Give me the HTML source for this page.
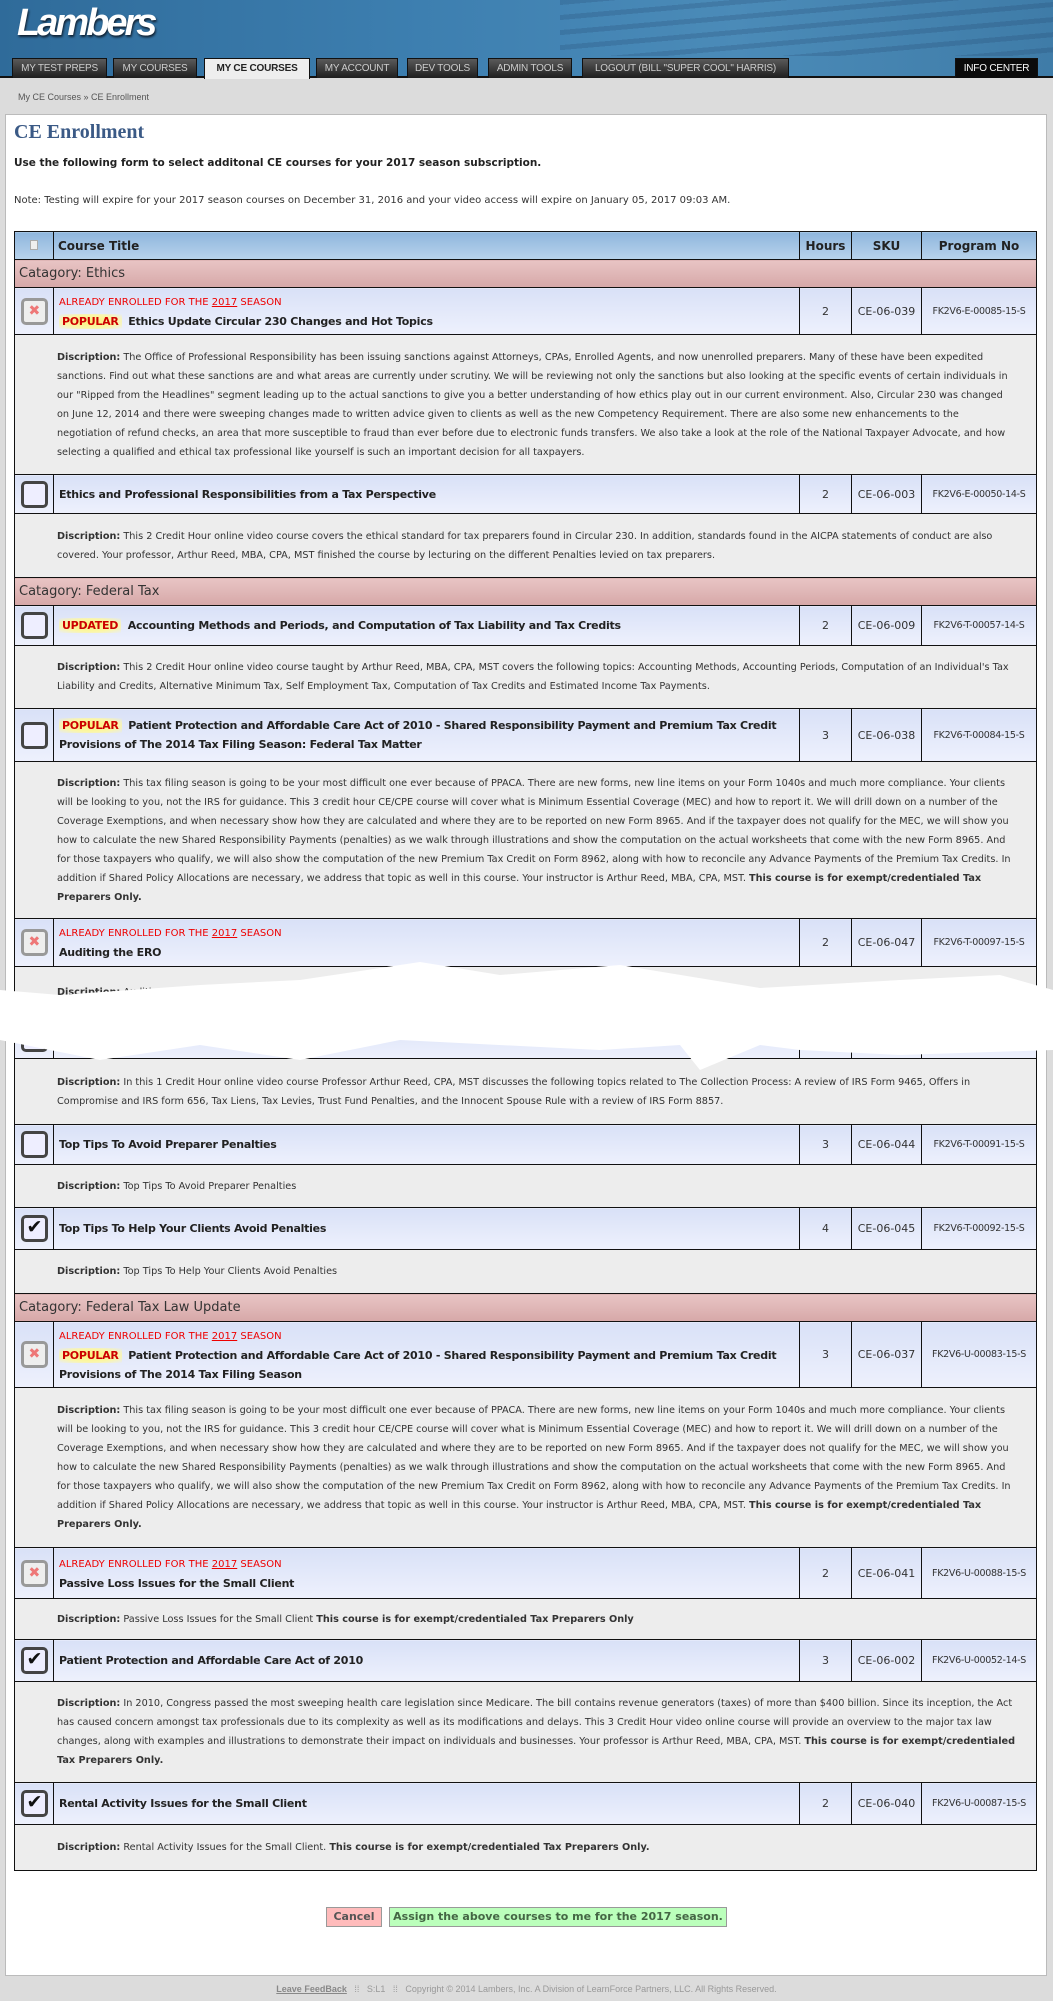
<!DOCTYPE html>
<html><head><meta charset="utf-8">
<style>
*{box-sizing:border-box;margin:0;padding:0}
body{width:1053px;height:2001px;background:#dcdcdc;font-family:"DejaVu Sans","Liberation Sans",sans-serif;color:#333;position:relative;overflow:hidden}
#hdr{position:absolute;left:0;top:0;width:1053px;height:78px;background:linear-gradient(90deg,#2f6b9a 0%,#3d7fb0 40%,#4b8bb8 70%,#3f7ca8 100%);border-bottom:2px solid #111}
#hdr .lines{position:absolute;left:560px;top:0;width:493px;height:56px;background:repeating-linear-gradient(175deg,rgba(30,60,100,.35) 0 5px,rgba(60,110,150,0) 5px 15px);opacity:.6}
#logo{position:absolute;left:17px;top:2px;font-family:"Liberation Sans",sans-serif;font-style:italic;font-weight:bold;font-size:38px;color:#fff;letter-spacing:-3px;text-shadow:1px 2px 2px #123}
.tab{position:absolute;top:58px;height:20px;background:linear-gradient(#5a5a5a,#1e1e1e);border:1px solid #111;border-bottom:none;color:#ccc;font-size:10px;line-height:19px;text-align:center;font-family:"Liberation Sans",sans-serif;letter-spacing:-.2px}
.tab.on{background:#eee;color:#222;font-weight:bold;top:58px;height:21px}
.tab.info{background:#0b0b0b;color:#fff}
#crumb{position:absolute;left:18px;top:92px;font-size:9px;color:#555;font-family:"Liberation Sans",sans-serif}
#box{position:absolute;left:5px;top:114px;width:1042px;height:1862px;background:#fff;border:1px solid #bbb}
h1{position:absolute;left:14px;top:121px;font-family:"Liberation Serif",serif;font-size:20px;color:#3b5a86;font-weight:bold}
.intro{position:absolute;left:14px;top:157px;font-size:10.5px;font-weight:bold;color:#222}
.note{position:absolute;left:14px;top:195px;font-size:10px;color:#333}
table{position:absolute;left:14px;top:231px;width:1022px;border-collapse:collapse;table-layout:fixed}
td,th{border:1px solid #111;font-size:10px;vertical-align:middle}
th{background:linear-gradient(#8fb6dd,#b8d3ec);height:28px;font-weight:bold;font-size:12px;color:#222;text-align:center}
th.t{text-align:left;padding-left:4px}
tr.cat td{background:linear-gradient(#e8c4c4,#d6a8a8);height:28px;font-size:13px;color:#333;padding-left:4px;border-left:1px solid #111;border-right:1px solid #111}
tr.row td{background:linear-gradient(#d9e1f7,#eef1fd);}
tr.row td.c{text-align:center}
td.title{padding:2px 5px;font-weight:bold;font-size:11px;color:#222;line-height:19px;letter-spacing:-.25px}
td.h{text-align:center;font-size:11px}
td.sku{text-align:center;font-size:11px}
td.pn{text-align:center;font-size:9.5px;letter-spacing:-.3px}
tr.d td{background:#ededed;padding:6px 20px 6px 42px;line-height:19px;font-size:9.7px;color:#333}
.en{color:#e00;font-weight:normal;font-size:10px;letter-spacing:0}
.en u{text-decoration:underline}
.tag{color:#c00;background:radial-gradient(#fbf37a,#fbf6a8 60%,rgba(255,255,255,0));padding:1px 3px;font-weight:bold;margin-right:3px}
.cb{display:inline-block;width:27px;height:27px;border:3px solid #444;border-radius:5px;background:#eef;vertical-align:middle;position:relative}
.cb.x{border-color:#999;background:#eee}
.cb.x:after{content:"\2716";position:absolute;left:5px;top:2px;color:#e77;font-size:14px}
.cb.k:after{content:"\2714";position:absolute;left:3px;top:-2px;color:#111;font-size:19px}
#tear{position:absolute;left:0;top:960px;width:1053px;height:110px}
.btn{position:absolute;top:1907px;height:20px;font-size:11px;font-weight:bold;line-height:18px;text-align:center;border:1px solid #999}
#foot{position:absolute;top:1984px;left:0;width:1053px;text-align:center;font-size:9px;color:#999;font-family:"Liberation Sans",sans-serif}
</style></head><body>
<div id="hdr"><div class="lines"></div><div id="logo">Lambers</div></div>
<div class="tab" style="left:12px;width:95px">MY TEST PREPS</div>
<div class="tab" style="left:113px;width:84px">MY COURSES</div>
<div class="tab on" style="left:204px;width:106px">MY CE COURSES</div>
<div class="tab" style="left:316px;width:82px">MY ACCOUNT</div>
<div class="tab" style="left:407px;width:71px">DEV TOOLS</div>
<div class="tab" style="left:488px;width:84px">ADMIN TOOLS</div>
<div class="tab" style="left:582px;width:207px">LOGOUT (BILL "SUPER COOL" HARRIS)</div>
<div class="tab info" style="left:955px;width:83px">INFO CENTER</div>
<div id="crumb">My CE Courses » CE Enrollment</div>
<div id="box"></div>
<h1>CE Enrollment</h1>
<div class="intro">Use the following form to select additonal CE courses for your 2017 season subscription.</div>
<div class="note">Note: Testing will expire for your 2017 season courses on December 31, 2016 and your video access will expire on January 05, 2017 09:03 AM.</div>
<table>
<colgroup><col style="width:39px"><col style="width:746px"><col style="width:52px"><col style="width:70px"><col style="width:115px"></colgroup>
<tr><th><span style="display:inline-block;width:8px;height:10px;background:#eee;border:1px solid #aaa"></span></th><th class="t">Course Title</th><th>Hours</th><th>SKU</th><th>Program No</th></tr>
<tr class="cat"><td colspan="5">Catagory: Ethics</td></tr>
<tr class="row" style="height:47px"><td class="c"><span class="cb x"></span></td><td class="title"><span class="en">ALREADY ENROLLED FOR THE <u>2017</u> SEASON</span><br><span class="tag">POPULAR</span> Ethics Update Circular 230 Changes and Hot Topics</td><td class="h">2</td><td class="sku">CE-06-039</td><td class="pn">FK2V6-E-00085-15-S</td></tr>
<tr class="d" style="height:140px"><td colspan="5"><b>Discription:</b> The Office of Professional Responsibility has been issuing sanctions against Attorneys, CPAs, Enrolled Agents, and now unenrolled preparers. Many of these have been expedited sanctions. Find out what these sanctions are and what areas are currently under scrutiny. We will be reviewing not only the sanctions but also looking at the specific events of certain individuals in our "Ripped from the Headlines" segment leading up to the actual sanctions to give you a better understanding of how ethics play out in our current environment. Also, Circular 230 was changed on June 12, 2014 and there were sweeping changes made to written advice given to clients as well as the new Competency Requirement. There are also some new enhancements to the negotiation of refund checks, an area that more susceptible to fraud than ever before due to electronic funds transfers. We also take a look at the role of the National Taxpayer Advocate, and how selecting a qualified and ethical tax professional like yourself is such an important decision for all taxpayers.</td></tr>
<tr class="row" style="height:39px"><td class="c"><span class="cb"></span></td><td class="title">Ethics and Professional Responsibilities from a Tax Perspective</td><td class="h">2</td><td class="sku">CE-06-003</td><td class="pn">FK2V6-E-00050-14-S</td></tr>
<tr class="d" style="height:64px"><td colspan="5"><b>Discription:</b> This 2 Credit Hour online video course covers the ethical standard for tax preparers found in Circular 230. In addition, standards found in the AICPA statements of conduct are also covered. Your professor, Arthur Reed, MBA, CPA, MST finished the course by lecturing on the different Penalties levied on tax preparers.</td></tr>
<tr class="cat"><td colspan="5">Catagory: Federal Tax</td></tr>
<tr class="row" style="height:40px"><td class="c"><span class="cb"></span></td><td class="title"><span class="tag">UPDATED</span> Accounting Methods and Periods, and Computation of Tax Liability and Tax Credits</td><td class="h">2</td><td class="sku">CE-06-009</td><td class="pn">FK2V6-T-00057-14-S</td></tr>
<tr class="d" style="height:63px"><td colspan="5"><b>Discription:</b> This 2 Credit Hour online video course taught by Arthur Reed, MBA, CPA, MST covers the following topics: Accounting Methods, Accounting Periods, Computation of an Individual's Tax Liability and Credits, Alternative Minimum Tax, Self Employment Tax, Computation of Tax Credits and Estimated Income Tax Payments.</td></tr>
<tr class="row" style="height:53px"><td class="c"><span class="cb"></span></td><td class="title"><span class="tag">POPULAR</span> Patient Protection and Affordable Care Act of 2010 - Shared Responsibility Payment and Premium Tax Credit Provisions of The 2014 Tax Filing Season: Federal Tax Matter</td><td class="h">3</td><td class="sku">CE-06-038</td><td class="pn">FK2V6-T-00084-15-S</td></tr>
<tr class="d" style="height:157px"><td colspan="5"><b>Discription:</b> This tax filing season is going to be your most difficult one ever because of PPACA. There are new forms, new line items on your Form 1040s and much more compliance. Your clients will be looking to you, not the IRS for guidance. This 3 credit hour CE/CPE course will cover what is Minimum Essential Coverage (MEC) and how to report it. We will drill down on a number of the Coverage Exemptions, and when necessary show how they are calculated and where they are to be reported on new Form 8965. And if the taxpayer does not qualify for the MEC, we will show you how to calculate the new Shared Responsibility Payments (penalties) as we walk through illustrations and show the computation on the actual worksheets that come with the new Form 8965. And for those taxpayers who qualify, we will also show the computation of the new Premium Tax Credit on Form 8962, along with how to reconcile any Advance Payments of the Premium Tax Credits. In addition if Shared Policy Allocations are necessary, we address that topic as well in this course. Your instructor is Arthur Reed, MBA, CPA, MST. <b>This course is for exempt/credentialed Tax Preparers Only.</b></td></tr>
<tr class="row" style="height:48px"><td class="c"><span class="cb x"></span></td><td class="title"><span class="en">ALREADY ENROLLED FOR THE <u>2017</u> SEASON</span><br>Auditing the ERO</td><td class="h">2</td><td class="sku">CE-06-047</td><td class="pn">FK2V6-T-00097-15-S</td></tr>
<tr class="d" style="height:52px"><td colspan="5"><b>Discription:</b> Auditing the ERO</td></tr>
<tr class="row" style="height:40px"><td class="c"><span class="cb"></span></td><td class="title">The Collection Process</td><td class="h">1</td><td class="sku">CE-06-036</td><td class="pn">FK2V6-T-00096-15-S</td></tr>
<tr class="d" style="height:66px"><td colspan="5"><b>Discription:</b> In this 1 Credit Hour online video course Professor Arthur Reed, CPA, MST discusses the following topics related to The Collection Process: A review of IRS Form 9465, Offers in Compromise and IRS form 656, Tax Liens, Tax Levies, Trust Fund Penalties, and the Innocent Spouse Rule with a review of IRS Form 8857.</td></tr>
<tr class="row" style="height:40px"><td class="c"><span class="cb"></span></td><td class="title">Top Tips To Avoid Preparer Penalties</td><td class="h">3</td><td class="sku">CE-06-044</td><td class="pn">FK2V6-T-00091-15-S</td></tr>
<tr class="d" style="height:43px"><td colspan="5"><b>Discription:</b> Top Tips To Avoid Preparer Penalties</td></tr>
<tr class="row" style="height:42px"><td class="c"><span class="cb k"></span></td><td class="title">Top Tips To Help Your Clients Avoid Penalties</td><td class="h">4</td><td class="sku">CE-06-045</td><td class="pn">FK2V6-T-00092-15-S</td></tr>
<tr class="d" style="height:44px"><td colspan="5"><b>Discription:</b> Top Tips To Help Your Clients Avoid Penalties</td></tr>
<tr class="cat"><td colspan="5">Catagory: Federal Tax Law Update</td></tr>
<tr class="row" style="height:66px"><td class="c"><span class="cb x"></span></td><td class="title"><span class="en">ALREADY ENROLLED FOR THE <u>2017</u> SEASON</span><br><span class="tag">POPULAR</span> Patient Protection and Affordable Care Act of 2010 - Shared Responsibility Payment and Premium Tax Credit Provisions of The 2014 Tax Filing Season</td><td class="h">3</td><td class="sku">CE-06-037</td><td class="pn">FK2V6-U-00083-15-S</td></tr>
<tr class="d" style="height:160px"><td colspan="5"><b>Discription:</b> This tax filing season is going to be your most difficult one ever because of PPACA. There are new forms, new line items on your Form 1040s and much more compliance. Your clients will be looking to you, not the IRS for guidance. This 3 credit hour CE/CPE course will cover what is Minimum Essential Coverage (MEC) and how to report it. We will drill down on a number of the Coverage Exemptions, and when necessary show how they are calculated and where they are to be reported on new Form 8965. And if the taxpayer does not qualify for the MEC, we will show you how to calculate the new Shared Responsibility Payments (penalties) as we walk through illustrations and show the computation on the actual worksheets that come with the new Form 8965. And for those taxpayers who qualify, we will also show the computation of the new Premium Tax Credit on Form 8962, along with how to reconcile any Advance Payments of the Premium Tax Credits. In addition if Shared Policy Allocations are necessary, we address that topic as well in this course. Your instructor is Arthur Reed, MBA, CPA, MST. <b>This course is for exempt/credentialed Tax Preparers Only.</b></td></tr>
<tr class="row" style="height:51px"><td class="c"><span class="cb x"></span></td><td class="title"><span class="en">ALREADY ENROLLED FOR THE <u>2017</u> SEASON</span><br>Passive Loss Issues for the Small Client</td><td class="h">2</td><td class="sku">CE-06-041</td><td class="pn">FK2V6-U-00088-15-S</td></tr>
<tr class="d" style="height:41px"><td colspan="5"><b>Discription:</b> Passive Loss Issues for the Small Client <b>This course is for exempt/credentialed Tax Preparers Only</b></td></tr>
<tr class="row" style="height:42px"><td class="c"><span class="cb k"></span></td><td class="title">Patient Protection and Affordable Care Act of 2010</td><td class="h">3</td><td class="sku">CE-06-002</td><td class="pn">FK2V6-U-00052-14-S</td></tr>
<tr class="d" style="height:101px"><td colspan="5"><b>Discription:</b> In 2010, Congress passed the most sweeping health care legislation since Medicare. The bill contains revenue generators (taxes) of more than $400 billion. Since its inception, the Act has caused concern amongst tax professionals due to its complexity as well as its modifications and delays. This 3 Credit Hour video online course will provide an overview to the major tax law changes, along with examples and illustrations to demonstrate their impact on individuals and businesses. Your professor is Arthur Reed, MBA, CPA, MST. <b>This course is for exempt/credentialed Tax Preparers Only.</b></td></tr>
<tr class="row" style="height:42px"><td class="c"><span class="cb k"></span></td><td class="title">Rental Activity Issues for the Small Client</td><td class="h">2</td><td class="sku">CE-06-040</td><td class="pn">FK2V6-U-00087-15-S</td></tr>
<tr class="d" style="height:46px"><td colspan="5"><b>Discription:</b> Rental Activity Issues for the Small Client. <b>This course is for exempt/credentialed Tax Preparers Only.</b></td></tr>
</table>
<svg id="tear" viewBox="0 0 1053 110" preserveAspectRatio="none"><polygon fill="#fff" points="60,35 200,25 300,20 420,2 500,15 620,5 760,28 900,20 1000,15 1053,30 1053,90 900,95 800,90 760,85 700,110 680,85 600,90 400,80 300,100 200,85 100,100 0,80 0,30"/></svg>
<div class="btn" style="left:326px;width:56px;background:#fbb;color:#555">Cancel</div>
<div class="btn" style="left:389px;width:338px;background:#bfb;color:#464">Assign the above courses to me for the 2017 season.</div>
<div id="foot"><u style="color:#888;font-weight:bold">Leave FeedBack</u> &nbsp; ⁞⁞ &nbsp; S:L1 &nbsp; ⁞⁞ &nbsp; Copyright © 2014 Lambers, Inc. A Division of LearnForce Partners, LLC. All Rights Reserved.</div>
</body></html>
